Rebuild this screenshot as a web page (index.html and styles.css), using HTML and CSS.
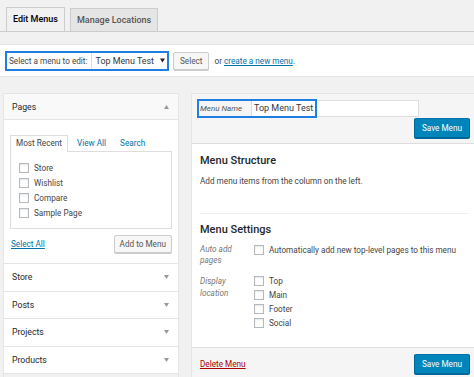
FILE: index.html
```html
<!DOCTYPE html>
<html lang="en">
<head>
    <meta charset="UTF-8">
    <meta name="viewport" content="width=device-width, initial-scale=1.0">
    <title>Menus</title>
    <link rel="stylesheet" href="styles.css">
</head>
<body>
    <div class="nav-tabs">
        <span class="nav-tab active">Edit Menus</span>
        <span class="nav-tab">Manage Locations</span>
    </div>

    <div class="manage-menus">
        <div class="menu-select">
            <span class="select-label">Select a menu to edit:</span>
            <span class="select-box">Top Menu Test
                <svg class="caret" width="5" height="5" viewBox="0 0 5 5"><path d="M0 0.5h5L2.5 4.5z" fill="#222"/></svg>
            </span>
        </div>
        <span class="button">Select</span>
        <span class="or-text">or <a href="#">create a new menu</a>.</span>
    </div>

    <div class="columns">
        <div class="side">
            <div class="section open">
                <div class="section-title">Pages
                    <svg class="arrow" width="5" height="4" viewBox="0 0 5 4"><path d="M0 4h5L2.5 0z" fill="#999"/></svg>
                </div>
                <div class="section-body">
                    <div class="inner-tabs">
                        <span class="inner-tab active">Most Recent</span>
                        <a href="#" class="inner-tab">View All</a>
                        <a href="#" class="inner-tab">Search</a>
                    </div>
                    <div class="tab-panel">
                        <div class="check-row"><span class="checkbox"></span>Store</div>
                        <div class="check-row"><span class="checkbox"></span>Wishlist</div>
                        <div class="check-row"><span class="checkbox"></span>Compare</div>
                        <div class="check-row"><span class="checkbox"></span>Sample Page</div>
                    </div>
                    <div class="section-actions">
                        <a href="#">Select All</a>
                        <span class="button">Add to Menu</span>
                    </div>
                </div>
            </div>
            <div class="section">
                <div class="section-title">Store
                    <svg class="arrow" width="5" height="4" viewBox="0 0 5 4"><path d="M0 0h5L2.5 4z" fill="#999"/></svg>
                </div>
            </div>
            <div class="section">
                <div class="section-title">Posts
                    <svg class="arrow" width="5" height="4" viewBox="0 0 5 4"><path d="M0 0h5L2.5 4z" fill="#999"/></svg>
                </div>
            </div>
            <div class="section">
                <div class="section-title">Projects
                    <svg class="arrow" width="5" height="4" viewBox="0 0 5 4"><path d="M0 0h5L2.5 4z" fill="#999"/></svg>
                </div>
            </div>
            <div class="section">
                <div class="section-title">Products
                    <svg class="arrow" width="5" height="4" viewBox="0 0 5 4"><path d="M0 0h5L2.5 4z" fill="#999"/></svg>
                </div>
            </div>
        </div>

        <div class="main">
            <div class="main-header">
                <div class="name-row">
                    <span class="name-label">Menu Name</span>
                    <span class="name-input">Top Menu Test</span>
                    <span class="highlight-box"></span>
                </div>
                <div class="header-actions">
                    <span class="button primary">Save Menu</span>
                </div>
            </div>

            <div class="main-body">
                <h3>Menu Structure</h3>
                <p class="hint">Add menu items from the column on the left.</p>
                <div class="divider"></div>
                <h3>Menu Settings</h3>
                <div class="setting">
                    <div class="setting-label">Auto add pages</div>
                    <div class="setting-options">
                        <div class="check-row"><span class="checkbox"></span>Automatically add new top-level pages to this menu</div>
                    </div>
                </div>
                <div class="setting">
                    <div class="setting-label">Display location</div>
                    <div class="setting-options">
                        <div class="check-row"><span class="checkbox"></span>Top</div>
                        <div class="check-row"><span class="checkbox"></span>Main</div>
                        <div class="check-row"><span class="checkbox"></span>Footer</div>
                        <div class="check-row"><span class="checkbox"></span>Social</div>
                    </div>
                </div>
            </div>

            <div class="main-footer">
                <a href="#" class="delete">Delete Menu</a>
                <span class="button primary">Save Menu</span>
            </div>
        </div>
    </div>
</body>
</html>
```

FILE: styles.css
```css
body {
    margin: 0;
    background-color: #f1f1f1;
    font-family: Roboto, "Open Sans", sans-serif;
    font-size: 8.2px;
    color: #444;
    overflow: hidden;
}
a {
    color: #0073aa;
}

/* top tabs */
.nav-tabs {
    display: flex;
    gap: 5px;
    padding: 7px 0 0 6px;
    border-bottom: 1px solid #ccc;
}
.nav-tab {
    display: block;
    height: 22px;
    line-height: 22px;
    padding: 0 6px;
    border: 1px solid #ccc;
    border-bottom: none;
    background-color: #e5e5e5;
    color: #555;
    font-weight: 500;
    font-size: 9px;
    margin-top: 1px;
}
.nav-tab.active {
    background-color: #f1f1f1;
    color: #000;
    margin-top: 0;
    height: 23px;
    margin-bottom: -1px;
}

/* menu selector strip */
.manage-menus {
    display: flex;
    align-items: center;
    margin-top: 12px;
    height: 31px;
    background-color: #fff;
    border-top: 1px solid #e5e5e5;
    border-bottom: 1px solid #e5e5e5;
    padding-left: 5px;
}
.menu-select {
    display: flex;
    align-items: center;
    height: 16px;
    border: 2px solid #1e7fe0;
}
.select-label {
    padding: 0 3px 0 2px;
    border-right: 1px solid #ddd;
    line-height: 16px;
    font-size: 8.2px;
}
.select-box {
    display: flex;
    align-items: center;
    gap: 6px;
    padding: 0 2px 0 4px;
    color: #32373c;
    font-size: 8.9px;
}
.button {
    display: inline-block;
    height: 16px;
    line-height: 16px;
    padding: 0 5px;
    border: 1px solid #ccc;
    border-radius: 2px;
    background-color: #f7f7f7;
    color: #555;
    box-shadow: 0 1px 0 #ccc;
}
.manage-menus .button {
    margin-left: 4px;
    padding: 0 6px;
}
.or-text {
    margin-left: 5px;
}

/* columns */
.columns {
    display: flex;
    gap: 12px;
    margin-top: 16px;
    padding-left: 3px;
}
.side {
    width: 174px;
    flex-shrink: 0;
    border-left: 1px solid #e5e5e5;
    border-right: 1px solid #e5e5e5;
}
.section {
    background-color: #fff;
    border-top: 1px solid #e5e5e5;
}
.section:last-child {
    border-bottom: 1px solid #e5e5e5;
}
.section-title {
    display: flex;
    justify-content: space-between;
    align-items: center;
    height: 26.5px;
    padding: 0 9px 0 8px;
    color: #23282d;
    font-size: 8.7px;
}
.section.open .section-title {
    height: 25px;
    background-color: #f9f9f9;
    border-bottom: 1px solid #e5e5e5;
}
.section-body {
    padding: 15px 6px 10px 6px;
}
.inner-tabs {
    display: flex;
    gap: 4px;
}
.inner-tab {
    display: block;
    height: 16px;
    line-height: 16px;
    padding: 0 5px;
    text-decoration: none;
}
.inner-tab.active {
    border: 1px solid #ddd;
    border-bottom: none;
    background-color: #fff;
    color: #444;
    margin-bottom: -1px;
    height: 16px;
    line-height: 15px;
}
.tab-panel {
    border: 1px solid #ddd;
    padding: 8px;
}
.check-row {
    display: flex;
    align-items: center;
    gap: 5px;
    height: 15px;
}
.checkbox {
    width: 8px;
    height: 8px;
    border: 1px solid #b4b9be;
    background-color: #fff;
    box-shadow: inset 0 1px 2px rgba(0, 0, 0, 0.1);
    flex-shrink: 0;
}
.section-actions {
    display: flex;
    justify-content: space-between;
    align-items: center;
    margin-top: 6px;
    padding-left: 1px;
}

/* right column */
.main {
    width: 284px;
    flex-shrink: 0;
    border: 1px solid #e5e5e5;
    background-color: #fff;
}
.main-header {
    background-color: #f5f5f5;
    border-bottom: 1px solid #ddd;
    padding: 6px 6px 5px 5px;
}
.name-row {
    position: relative;
    display: flex;
    align-items: center;
    height: 17px;
}
.name-label {
    width: 54px;
    padding-left: 3px;
    box-sizing: border-box;
    font-style: italic;
    color: #555;
    font-size: 8px;
}
.name-input {
    width: 164px;
    height: 15px;
    line-height: 15px;
    padding-left: 2px;
    border: 1px solid #ddd;
    background-color: #fff;
    color: #32373c;
    font-size: 9px;
}
.highlight-box {
    position: absolute;
    left: 0;
    top: -1px;
    width: 116px;
    height: 15px;
    border: 2px solid #1e7fe0;
}
.header-actions {
    display: flex;
    justify-content: flex-end;
    margin-top: 1px;
}
.button.primary {
    height: 18px;
    line-height: 18px;
    background-color: #0085ba;
    border-color: #0073aa #006799 #006799;
    box-shadow: 0 1px 0 #006799;
    color: #fff;
    padding: 0 7px;
}
.main-body {
    padding: 10px 7px 17px 8px;
}
h3 {
    margin: 0;
    font-size: 11px;
    font-weight: 500;
    color: #23282d;
    line-height: 14px;
}
.hint {
    margin: 7px 0 0 0;
    line-height: 12px;
}
.divider {
    margin: 26px 0 9px 0;
    border-top: 1px solid #eee;
}
.setting {
    display: flex;
    margin-top: 6px;
}
.setting + .setting {
    margin-top: 8px;
}
.setting-label {
    width: 40px;
    padding: 1px 14px 0 0;
    font-style: italic;
    color: #777;
    line-height: 11px;
}
.setting + .setting .setting-label {
    line-height: 12px;
}
.setting-options .check-row {
    height: 14px;
}
.main-footer {
    display: flex;
    justify-content: space-between;
    align-items: center;
    height: 31px;
    padding: 0 6px 0 8px;
    background-color: #f5f5f5;
    border-top: 1px solid #ddd;
}
.delete {
    color: #a00;
}
```
